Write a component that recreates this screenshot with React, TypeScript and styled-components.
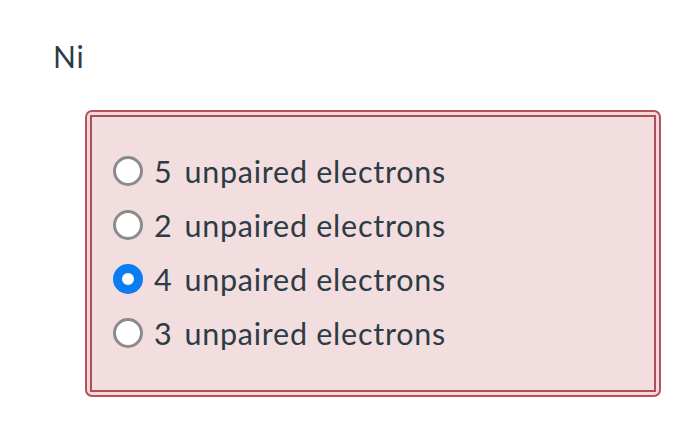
import React, { FC } from 'react';
import styled, { createGlobalStyle } from 'styled-components';

const GlobalStyle = createGlobalStyle`
  body {
    margin: 0;
    background: #ffffff;
    font-family: Lato, 'Open Sans', sans-serif;
    color: #2d3b45;
  }
`;

const Page = styled.div`
  padding: 36px 0 0 53px;
`;

const Element = styled.div`
  font-size: 30px;
  line-height: 40px;
  letter-spacing: 0.8px;
  color: #2d3b45;
`;

const AnswerBox = styled.div`
  margin: 34px 0 0 32px;
  width: 576px;
  box-sizing: border-box;
  border: 2px solid #b0545e;
  border-radius: 7px;
  padding: 3px;
  background: #fbd6d8;
`;

const Inner = styled.div`
  border: 2px solid #a9505a;
  background: #f2dedf;
  padding: 34px 0 37px 21px;
  display: flex;
  flex-direction: column;
  gap: 14px;
`;

const Option = styled.label`
  display: flex;
  align-items: center;
  font-size: 30.5px;
  line-height: 40px;
  letter-spacing: 0.75px;
  color: #2d3b45;
`;

const Radio = styled.span<{ checked?: boolean }>`
  width: 30px;
  height: 30px;
  box-sizing: border-box;
  border-radius: 50%;
  background: #ffffff;
  border: ${(p) => (p.checked ? '9px solid #0a7df5' : '3px solid #8b8b8b')};
  margin-right: 11px;
  flex: none;
`;

const Count = styled.span`
  margin-right: 12px;
`;

const options = [
  { n: 5, checked: false },
  { n: 2, checked: false },
  { n: 4, checked: true },
  { n: 3, checked: false },
];

const App: FC = () => (
  <Page>
    <GlobalStyle />
    <Element>Ni</Element>
    <AnswerBox>
      <Inner>
        {options.map((o) => (
          <Option key={o.n}>
            <Radio checked={o.checked} />
            <Count>{o.n}</Count>
            unpaired electrons
          </Option>
        ))}
      </Inner>
    </AnswerBox>
  </Page>
);

export default App;
